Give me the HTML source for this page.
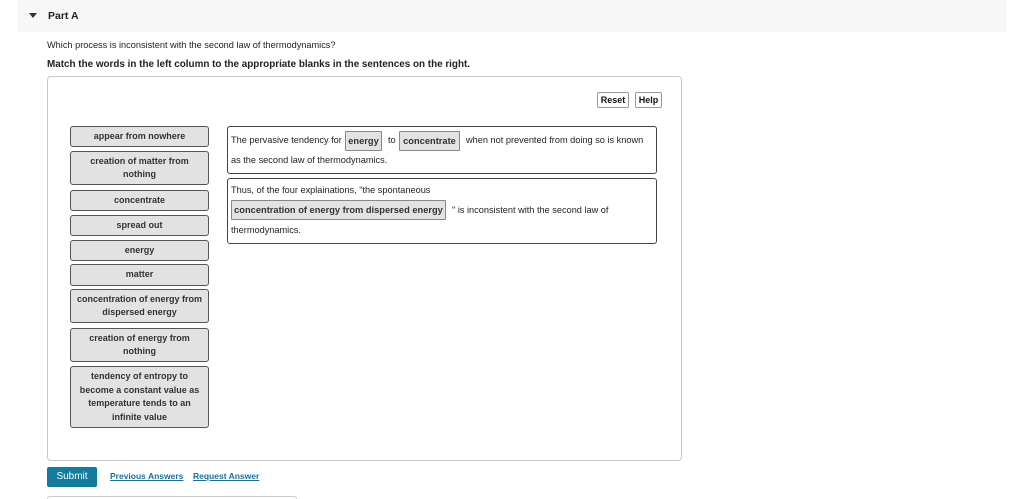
<!DOCTYPE html>
<html style="overflow:hidden;height:499px"><head><style>
*{margin:0;padding:0;box-sizing:border-box}
body{width:1024px;height:499px;background:#fff;font-family:"Liberation Sans",sans-serif;color:#222;position:relative;overflow:hidden}
.a{position:absolute}
.hdr{left:18px;top:0;width:988px;height:32px;background:#f7f7f7}
.tri{left:29px;top:13px;width:0;height:0;border-left:4px solid transparent;border-right:4px solid transparent;border-top:5px solid #333}
.item{position:absolute;left:70px;width:139px;background:#e2e2e2;border:1px solid #555;border-radius:3px;font-size:9px;font-weight:bold;text-align:center;line-height:13.5px;color:#333;display:flex;align-items:center;justify-content:center;padding:0 3px}
.sbox{position:absolute;left:227px;width:430px;border:1px solid #444;border-radius:3px;font-size:8.5px;color:#333}
.chip{position:absolute;background:#e2e2e2;border:1px solid #888;border-radius:1px;font-size:9.3px;font-weight:bold;color:#333;text-align:center;line-height:18px}
.btn{position:absolute;top:92px;height:16px;border:1px solid #999;border-radius:2px;font-size:9px;font-weight:bold;line-height:14px;text-align:center;color:#111;background:#fff}
.t{position:absolute;white-space:nowrap}
.s{font-size:9.2px}
</style></head><body>
<div class="a hdr"></div>
<div class="a tri"></div>
<div class="t" style="left:48px;top:10px;font-size:10.5px;font-weight:bold">Part A</div>
<div class="t" style="left:47px;top:40px;font-size:9.2px">Which process is inconsistent with the second law of thermodynamics?</div>
<div class="t" style="left:47px;top:59px;font-size:9.9px;font-weight:bold">Match the words in the left column to the appropriate blanks in the sentences on the right.</div>
<div class="a" style="left:47px;top:76px;width:635px;height:385px;border:1px solid #c8c8c8;border-radius:4px"></div>
<div class="btn" style="left:597px;width:32px">Reset</div>
<div class="btn" style="left:635px;width:27px">Help</div>
<div class="item" style="top:126px;height:21px">appear from nowhere</div>
<div class="item" style="top:151px;height:34px">creation of matter from nothing</div>
<div class="item" style="top:190px;height:21px">concentrate</div>
<div class="item" style="top:215px;height:21px">spread out</div>
<div class="item" style="top:240px;height:21px">energy</div>
<div class="item" style="top:264px;height:22px">matter</div>
<div class="item" style="top:289px;height:34px">concentration of energy from dispersed energy</div>
<div class="item" style="top:328px;height:34px">creation of energy from nothing</div>
<div class="item" style="top:366px;height:62px">tendency of entropy to become a constant value as temperature tends to an infinite value</div>
<div class="sbox" style="top:126px;height:48px"></div>
<div class="sbox" style="top:178px;height:66px"></div>
<div class="t s" style="left:231px;top:135px">The pervasive tendency for</div>
<div class="chip" style="left:345px;top:131px;width:37px;height:20px">energy</div>
<div class="t s" style="left:388px;top:135px">to</div>
<div class="chip" style="left:399px;top:131px;width:61px;height:20px">concentrate</div>
<div class="t s" style="left:466px;top:135px">when not prevented from doing so is known</div>
<div class="t s" style="left:231px;top:155px">as the second law of thermodynamics.</div>
<div class="t s" style="left:231px;top:185px">Thus, of the four explainations, "the spontaneous</div>
<div class="chip" style="left:231px;top:200px;width:215px;height:20px">concentration of energy from dispersed energy</div>
<div class="t s" style="left:452px;top:205px">" is inconsistent with the second law of</div>
<div class="t s" style="left:231px;top:225px">thermodynamics.</div>
<div class="a" style="left:47px;top:467px;width:50px;height:20px;background:#137b9c;border-radius:2px;color:#fff;font-size:10px;line-height:20px;text-align:center">Submit</div>
<div class="t" style="left:110px;top:471px;font-size:8.5px;font-weight:bold;color:#1a6e9c;text-decoration:underline">Previous Answers</div>
<div class="t" style="left:193px;top:471px;font-size:8.5px;font-weight:bold;color:#1a6e9c;text-decoration:underline">Request Answer</div>
<div class="a" style="left:47px;top:496px;width:250px;height:10px;border:1px solid #ccc;border-radius:3px"></div>
</body></html>
